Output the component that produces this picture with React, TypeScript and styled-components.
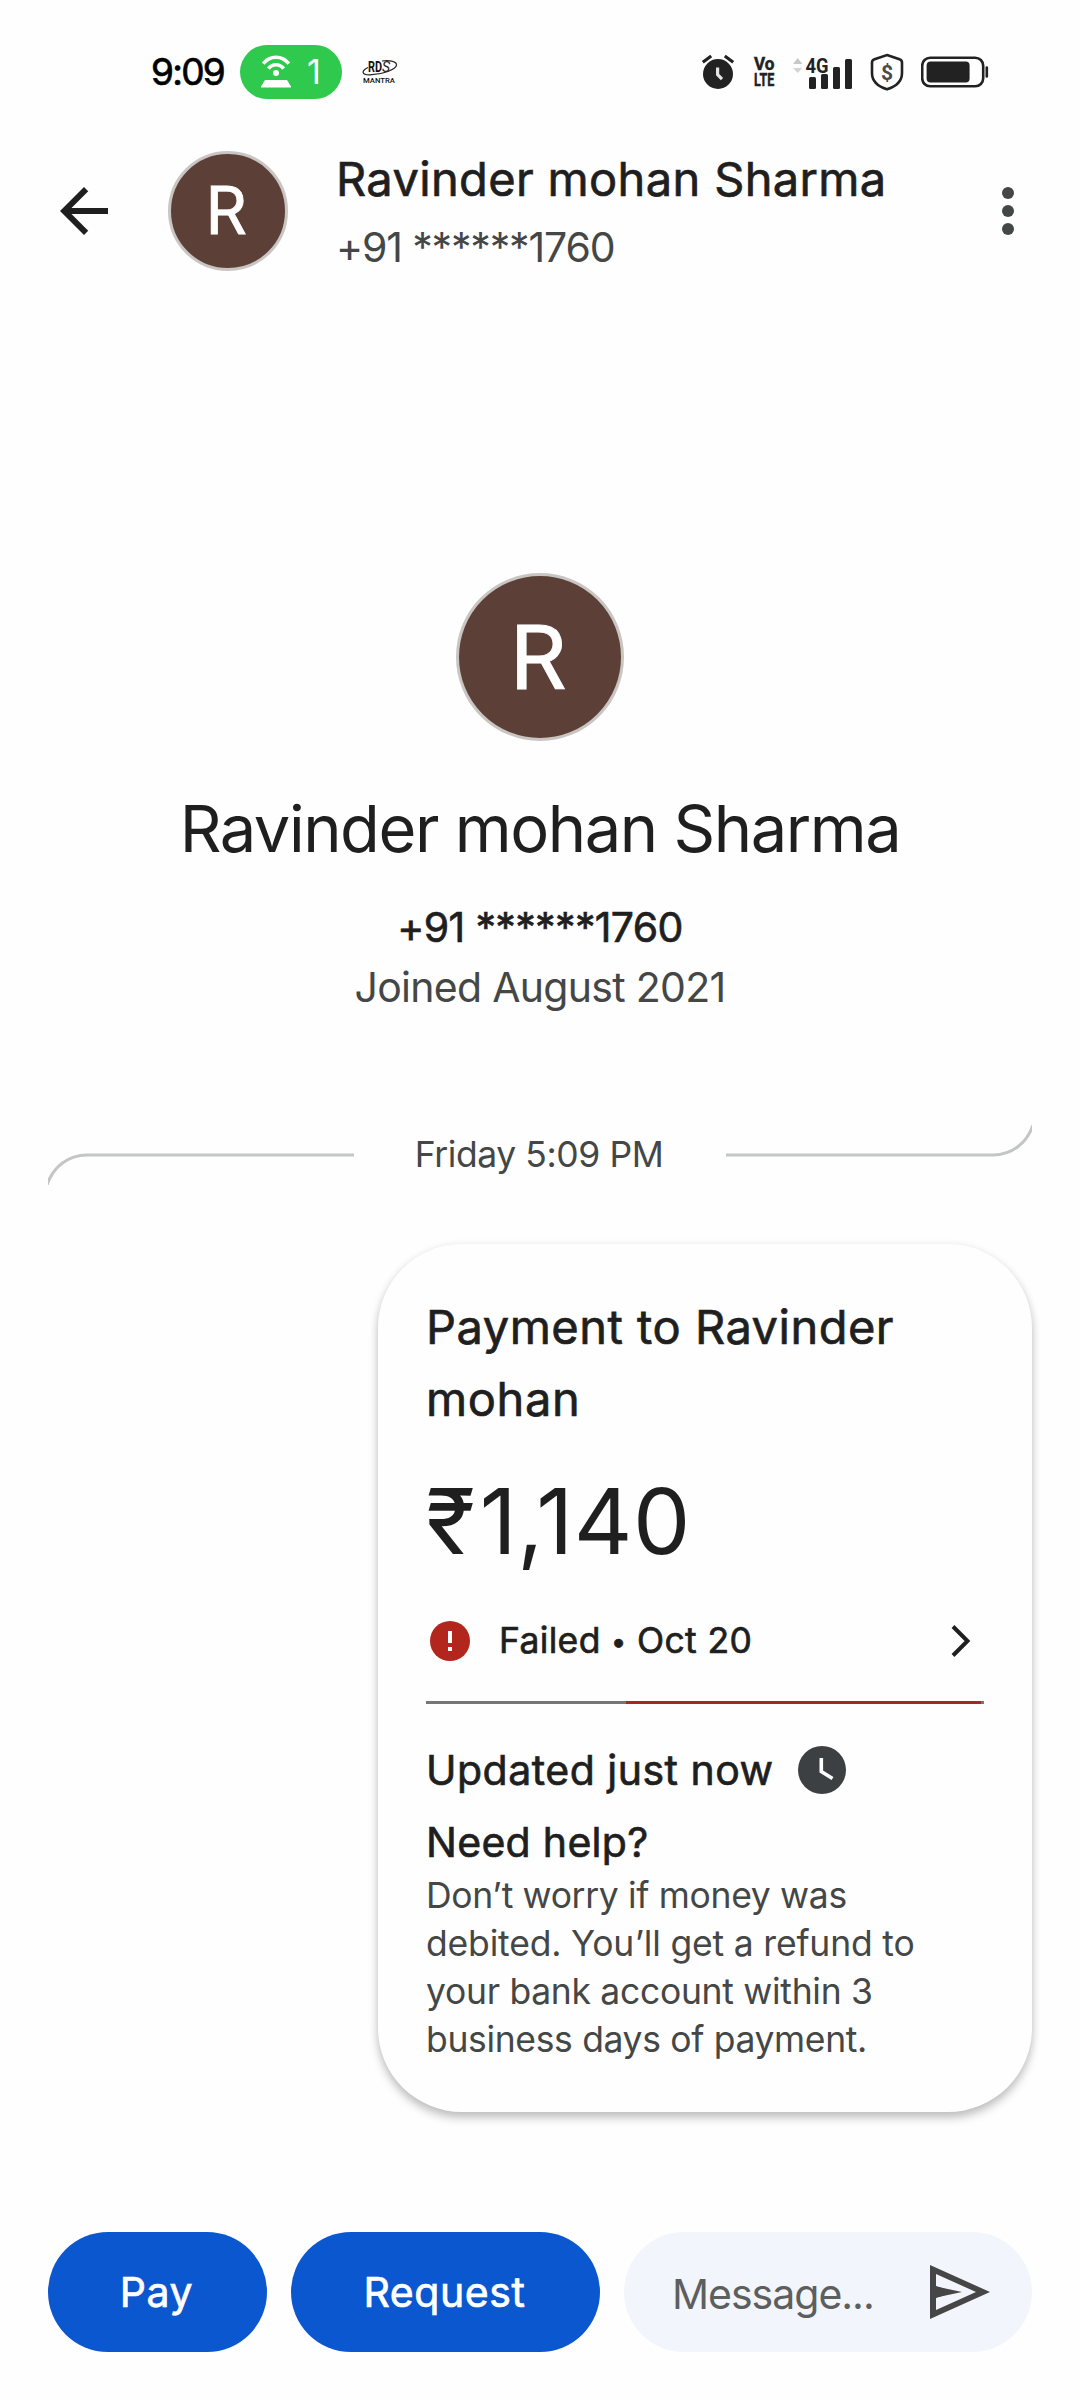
import React from "react";
import styled, { createGlobalStyle, css } from "styled-components";

const GlobalStyle = createGlobalStyle`
  *, *::before, *::after { box-sizing: border-box; }
  body { margin: 0; background: #fefefe; }
  button { border: 0; padding: 0; margin: 0; background: none; font: inherit; color: inherit; }
  svg { display: block; flex: none; }
`;

const ink = "#1f1f1f";
const muted = "#444746";

const Screen = styled.main`
  display: flex;
  flex-direction: column;
  width: 1080px;
  height: 2400px;
  background: #fefefe;
  color: ${ink};
  font-family: Inter, "Noto Sans", sans-serif;
  overflow: hidden;
`;

interface TextProps {
  $size: number;
  $line: number;
  $track?: number;
  $medium?: boolean;
  $tone?: string;
}

const Text = styled.span<TextProps>`
  display: block;
  font-size: ${(p) => p.$size}px;
  line-height: ${(p) => p.$line}px;
  letter-spacing: ${(p) => p.$track ?? 0}px;
  color: ${(p) => p.$tone ?? ink};
  white-space: nowrap;
  ${(p) =>
    p.$medium &&
    css`
      -webkit-text-stroke: 0.7px currentColor;
    `}
`;

/* ---------- status bar ---------- */

const StatusBar = styled.div`
  display: flex;
  align-items: center;
  justify-content: space-between;
  height: 144px;
  padding: 0 91px 0 151px;
`;

const StatusGroup = styled.div`
  display: flex;
  align-items: center;
`;

const HotspotPill = styled.div`
  display: flex;
  align-items: center;
  gap: 15px;
  width: 102px;
  height: 54px;
  margin-left: 16px;
  padding-left: 20px;
  border-radius: 27px;
  background: #2fc94e;
`;

const LogoSlot = styled.div`
  margin-left: 20px;
`;

const VoLte = styled.div`
  display: flex;
  flex-direction: column;
  width: 24px;
  margin-left: 19px;
  font-family: Roboto, sans-serif;
  font-weight: 700;
  font-size: 19px;
  line-height: 16px;
  color: #222;
  -webkit-text-stroke: 0.5px currentColor;
`;

const VoLteLine = styled.span<{ $scale: number }>`
  transform: scaleX(${(p) => p.$scale});
  transform-origin: left;
  white-space: nowrap;
`;

function HotspotIcon() {
  return (
    <svg width="32" height="34" viewBox="0 0 32 34" fill="none" stroke="#fff" strokeWidth="3.6">
      <path d="M3.2 8.6C10 .2 22 .2 28.8 8.6" />
      <path d="M8.4 13.6C12.4 8.4 19.6 8.4 23.6 13.6" />
      <circle cx="16" cy="18" r="3" fill="#fff" stroke="none" />
      <path d="M5 25h22l4 6.5c.3.6 0 1-.6 1H1.600c-.6 0-.9-.4-.6-1z" fill="#fff" stroke="none" />
    </svg>
  );
}

function MantraLogo() {
  return (
    <svg width="36" height="26" viewBox="0 0 36 26" fill="none">
      <path d="M6 8.500C-1 12-.5 16 8 15.800 20 15.600 35 10.500 34.500 5.500 34 2 27 1 20 2" stroke="#222" strokeWidth="1.200" />
      <text x="6" y="13" fontFamily="Roboto, sans-serif" fontWeight="700" fontSize="15" textLength="14" lengthAdjust="spacingAndGlyphs" fill="#111">
        RD
      </text>
      <text x="20" y="13" fontFamily="Roboto, sans-serif" fontStyle="italic" fontSize="14" fill="#222">
        S
      </text>
      <text x="1" y="24.200" fontFamily="Roboto, sans-serif" fontWeight="500" fontSize="7" textLength="32" lengthAdjust="spacingAndGlyphs" fill="#111">
        MANTRA
      </text>
    </svg>
  );
}

function AlarmIcon() {
  return (
    <svg width="34" height="36" viewBox="0 0 34 36">
      <circle cx="17" cy="20" r="15" fill="#222" />
      <path d="M1.800 8.200 10.200 2M32.200 8.200 23.800 2" stroke="#222" strokeWidth="3.200" fill="none" />
      <path d="M16.600 13.600v7l4.400 4.600" stroke="#e4e4e4" strokeWidth="3.200" fill="none" />
    </svg>
  );
}

const SignalSlot = styled.div`
  margin: 0 0 2px 14px;
`;

function SignalIcon() {
  return (
    <svg width="62" height="36" viewBox="0 0 62 36">
      <path d="M1 11 5.700 5l4.700 6z" fill="#c8c8c8" />
      <path d="M1 15h9.400L5.700 20z" fill="#d4d4d4" />
      <text x="13.500" y="19.500" fontFamily="Roboto, sans-serif" fontWeight="700" fontSize="21" textLength="23" lengthAdjust="spacingAndGlyphs" fill="#222">
        4G
      </text>
      <rect x="17" y="24" width="7" height="12" rx="1.500" fill="#222" />
      <rect x="29" y="21" width="7" height="15" rx="1.500" fill="#222" />
      <rect x="41" y="14" width="7" height="22" rx="1.500" fill="#222" />
      <rect x="53" y="6" width="7" height="30" rx="1.500" fill="#222" />
    </svg>
  );
}

const ShieldSlot = styled.div`
  margin-left: 16px;
`;

function ShieldIcon() {
  return (
    <svg width="34" height="38" viewBox="0 0 34 38">
      <path
        d="M17 2 29.500 6.200Q32 7 32 9.500V20C32 28 26 33.500 17 36.300 8 33.500 2 28 2 20V9.500Q2 7 4.500 6.200Z"
        fill="none"
        stroke="#222"
        strokeWidth="2.600"
      />
      <text x="17" y="26.500" textAnchor="middle" fontFamily="Roboto, sans-serif" fontWeight="700" fontSize="21" fill="#4a4a4a">
        $
      </text>
    </svg>
  );
}

const BatterySlot = styled.div`
  margin-left: 17px;
`;

function BatteryIcon() {
  return (
    <svg width="68" height="32" viewBox="0 0 68 32">
      <rect x="1.200" y="1.700" width="61" height="28.600" rx="8" fill="none" stroke="#222" strokeWidth="2.600" />
      <rect x="5.600" y="5.600" width="43" height="20.800" rx="4" fill="#222" />
      <path d="M65.800 11.500v9" stroke="#222" strokeWidth="2.600" strokeLinecap="round" />
    </svg>
  );
}

/* ---------- app bar ---------- */

const AppBar = styled.header`
  display: flex;
  align-items: center;
  height: 134px;
  padding: 0 36px 0 48px;
`;

const IconButton = styled.button`
  width: 72px;
  height: 72px;
`;

const Avatar = styled.div<{ $size: number; $glyph: number }>`
  display: flex;
  align-items: center;
  justify-content: center;
  flex: none;
  width: ${(p) => p.$size}px;
  height: ${(p) => p.$size}px;
  padding: 2px 4px 0 0;
  border: 3px solid #c9c5c2;
  border-radius: 50%;
  background: #5c4037;
  color: #fff;
  font-family: Roboto, sans-serif;
  font-size: ${(p) => p.$glyph}px;
  line-height: 1;
  -webkit-text-stroke: 0.8px currentColor;
`;

const AppBarAvatar = styled(Avatar)`
  margin-left: 48px;
`;

const Contact = styled.div`
  display: flex;
  flex: 1;
  flex-direction: column;
  gap: 14px;
  margin: 0 0 2px 48px;
`;

function BackIcon() {
  return (
    <svg width="72" height="72" viewBox="0 0 24 24" fill={ink}>
      <path d="M20 11H7.830l5.590-5.590L12 4l-8 8 8 8 1.410-1.410L7.830 13H20v-2z" />
    </svg>
  );
}

function MoreIcon() {
  return (
    <svg width="72" height="72" viewBox="0 0 24 24" fill={muted}>
      <circle cx="12" cy="6" r="2" />
      <circle cx="12" cy="12" r="2" />
      <circle cx="12" cy="18" r="2" />
    </svg>
  );
}

/* ---------- profile ---------- */

const Profile = styled.section`
  display: flex;
  flex-direction: column;
  align-items: center;
  padding-top: 295px;
`;

const ProfileName = styled.div`
  margin: 48px 0 28px;
`;

/* ---------- date divider ---------- */

const DateDivider = styled.div`
  display: flex;
  align-items: center;
  justify-content: space-between;
  height: 60px;
  margin: 108px 48px 0;
`;

const DateLabel = styled.div`
  padding-right: 2px;
`;

function RuleStart() {
  return (
    <svg width="306" height="60" viewBox="0 0 306 60" fill="none" stroke="#c4c6c5" strokeWidth="3">
      <path d="M306 30H39C20 30 5 42-1 60" />
    </svg>
  );
}

function RuleEnd() {
  return (
    <svg width="306" height="60" viewBox="0 0 306 60" fill="none" stroke="#c4c6c5" strokeWidth="3">
      <path d="M0 30H267C286 30 301 18 307 0" />
    </svg>
  );
}

/* ---------- payment card ---------- */

const Card = styled.article`
  display: flex;
  flex-direction: column;
  align-self: flex-end;
  width: 654px;
  height: 868px;
  margin: 59px 48px 0 0;
  padding: 47px 48px 0;
  border-radius: 84px;
  background: #fefefe;
  box-shadow: 0 6px 10px rgba(0, 0, 0, 0.22), 0 1px 9px rgba(0, 0, 0, 0.07);
`;

const CardTitle = styled.div`
  display: flex;
  flex-direction: column;
`;

const Amount = styled.div`
  margin-top: 31px;
`;

const Currency = styled.span`
  margin-right: 4px;
`;

const StatusRow = styled.div`
  display: flex;
  align-items: center;
  height: 72px;
  margin-top: 29px;
`;

const StatusLabel = styled.div`
  flex: 1;
  margin: 0 0 1px 25px;
`;

const Bullet = styled.span`
  font-size: 27px;
  vertical-align: 2px;
  line-height: 1;
`;

const Progress = styled.div`
  display: flex;
  height: 3px;
  margin-top: 24px;
  background: #747775;
`;

const ProgressFailed = styled.div`
  width: 355px;
  margin-left: 200px;
  background: #a12a26;
`;

const UpdatedRow = styled.div`
  display: flex;
  align-items: center;
  gap: 24px;
  height: 60px;
  margin: 36px 0 12px;
`;

function FailedIcon() {
  return (
    <svg width="48" height="48" viewBox="0 0 48 48">
      <circle cx="24" cy="24" r="20" fill="#b3261e" />
      <path d="M22 14h4v12h-4zM22 30h4v4h-4z" fill="#fff" />
    </svg>
  );
}

function ChevronIcon() {
  return (
    <svg width="48" height="48" viewBox="0 0 48 48" fill="none" stroke={ink} strokeWidth="4">
      <path d="M17 9.500 31.500 24 17 38.500" />
    </svg>
  );
}

function ClockIcon() {
  return (
    <svg width="48" height="48" viewBox="0 0 48 48">
      <circle cx="24" cy="24" r="24" fill="#3c4043" />
      <path d="M23.300 12v13.500l11.200 7" fill="none" stroke="#fff" strokeWidth="3.600" />
    </svg>
  );
}

/* ---------- bottom actions ---------- */

const Actions = styled.footer`
  display: flex;
  gap: 24px;
  height: 120px;
  margin: 120px 48px 0;
`;

const ActionButton = styled.button<{ $width: number }>`
  display: flex;
  align-items: center;
  justify-content: center;
  width: ${(p) => p.$width}px;
  padding-right: 2px;
  border-radius: 60px;
  background: #0b57d0;
`;

const MessageField = styled.div`
  display: flex;
  flex: 1;
  align-items: center;
  justify-content: space-between;
  padding: 0 36px 0 48px;
  border-radius: 60px;
  background: #f2f5fb;
`;

const MessageHint = styled.div`
  padding-top: 4px;
`;

function SendIcon() {
  return (
    <svg width="72" height="72" viewBox="0 0 72 72">
      <path
        fill={muted}
        fillRule="evenodd"
        d="M6 9 66 36 6 63zM12 18v12l18.500 6L12 42v12L52 36z"
      />
      <path fill={muted} d="M12 30.500 38 36 12 41.500z" />
    </svg>
  );
}

const refundLines = [
  { text: "Don’t worry if money was", track: -0.33 },
  { text: "debited. You’ll get a refund to", track: -0.18 },
  { text: "your bank account within 3", track: -0.3 },
  { text: "business days of payment.", track: -0.34 },
];

export default function App() {
  return (
    <Screen>
      <GlobalStyle />

      <StatusBar>
        <StatusGroup>
          <Text $size={37} $line={54} $track={-1.7} $medium $tone="#000">
            9:09
          </Text>
          <HotspotPill>
            <HotspotIcon />
            <Text $size={34} $line={54} $tone="#fff">
              1
            </Text>
          </HotspotPill>
          <LogoSlot>
            <MantraLogo />
          </LogoSlot>
        </StatusGroup>
        <StatusGroup>
          <AlarmIcon />
          <VoLte>
            <VoLteLine $scale={0.9}>Vo</VoLteLine>
            <VoLteLine $scale={0.66}>LTE</VoLteLine>
          </VoLte>
          <SignalSlot>
            <SignalIcon />
          </SignalSlot>
          <ShieldSlot>
            <ShieldIcon />
          </ShieldSlot>
          <BatterySlot>
            <BatteryIcon />
          </BatterySlot>
        </StatusGroup>
      </StatusBar>

      <AppBar>
        <IconButton aria-label="Back">
          <BackIcon />
        </IconButton>
        <AppBarAvatar $size={120} $glyph={66}>
          R
        </AppBarAvatar>
        <Contact>
          <Text $size={47} $line={60} $track={0.35} $medium>
            Ravinder mohan Sharma
          </Text>
          <Text $size={41} $line={48} $track={-1.15} $tone={muted}>
            +91 ******1760
          </Text>
        </Contact>
        <IconButton aria-label="More options">
          <MoreIcon />
        </IconButton>
      </AppBar>

      <Profile>
        <Avatar $size={168} $glyph={91}>
          R
        </Avatar>
        <ProfileName>
          <Text $size={65} $line={80} $track={-1.46}>
            Ravinder mohan Sharma
          </Text>
        </ProfileName>
        <Text $size={41} $line={60} $track={-0.65} $medium>
          +91 ******1760
        </Text>
        <Text $size={41} $line={60} $track={-0.71} $tone={muted}>
          Joined August 2021
        </Text>
      </Profile>

      <DateDivider>
        <RuleStart />
        <DateLabel>
          <Text $size={35.5} $line={48} $track={-0.42} $tone={muted}>
            Friday 5:09 PM
          </Text>
        </DateLabel>
        <RuleEnd />
      </DateDivider>

      <Card>
        <CardTitle>
          <Text $size={47} $line={72} $track={0.5} $medium>
            Payment to Ravinder
          </Text>
          <Text $size={47} $line={72} $track={0.6} $medium>
            mohan
          </Text>
        </CardTitle>
        <Amount>
          <Text $size={91} $line={110} $track={0.5}>
            <Currency>₹</Currency>1,140
          </Text>
        </Amount>
        <StatusRow>
          <FailedIcon />
          <StatusLabel>
            <Text $size={35.5} $line={48} $track={0.35} $medium>
              Failed <Bullet>•</Bullet> Oct 20
            </Text>
          </StatusLabel>
          <ChevronIcon />
        </StatusRow>
        <Progress>
          <ProgressFailed />
        </Progress>
        <UpdatedRow>
          <Text $size={41} $line={60} $track={0.5} $medium>
            Updated just now
          </Text>
          <ClockIcon />
        </UpdatedRow>
        <Text $size={41} $line={60} $track={0.3} $medium>
          Need help?
        </Text>
        {refundLines.map((line) => (
          <Text key={line.text} $size={35.5} $line={48} $track={line.track} $tone={muted}>
            {line.text}
          </Text>
        ))}
      </Card>

      <Actions>
        <ActionButton $width={219}>
          <Text $size={41} $line={60} $track={0.6} $medium $tone="#fff">
            Pay
          </Text>
        </ActionButton>
        <ActionButton $width={309}>
          <Text $size={41} $line={60} $track={0.6} $medium $tone="#fff">
            Request
          </Text>
        </ActionButton>
        <MessageField>
          <MessageHint>
            <Text $size={41} $line={60} $track={-1} $tone="#5c5f5e">
              Message...
            </Text>
          </MessageHint>
          <SendIcon />
        </MessageField>
      </Actions>
    </Screen>
  );
}
